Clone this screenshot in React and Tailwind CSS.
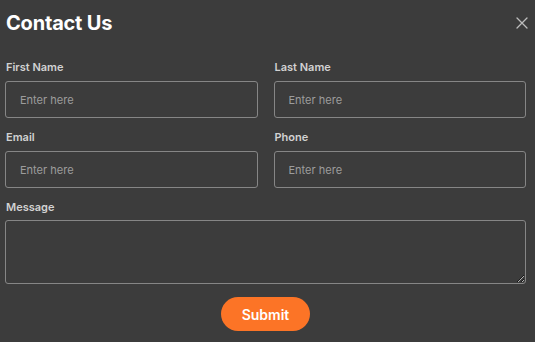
import React from "react";

function Field({ label }) {
  return (
    <div className="flex flex-col">
      <label className="pl-px text-[11px] leading-[16px] font-semibold text-[#d2d2d2] h-[16px]">{label}</label>
      <input
        placeholder="Enter here"
        className="mt-[6px] h-[37px] w-full rounded-[3px] border border-[#868686] bg-transparent pl-[14px] text-[11px] text-white placeholder-[#9c9c9c] outline-none"
      />
    </div>
  );
}

export default function App() {
  return (
    <div
      className="w-[535px] h-[342px] bg-[#3c3c3c] pl-[5px] pr-[9px] overflow-hidden"
      style={{ fontFamily: "Inter, 'Open Sans', sans-serif" }}
    >
      <div className="flex items-center justify-between mt-[9px] h-[28px] pl-px">
        <h1 className="text-[20px] leading-[28px] font-bold text-white tracking-[-0.2px]">Contact Us</h1>
        <svg width="12" height="12" viewBox="0 0 12 12" className="mr-[-2px]">
          <path d="M1 1 L11 11 M11 1 L1 11" stroke="#bdbdbd" strokeWidth="1.3" strokeLinecap="round" />
        </svg>
      </div>
      <div className="grid grid-cols-2 gap-x-4 gap-y-[11px] mt-[22px]">
        <Field label="First Name" />
        <Field label="Last Name" />
        <Field label="Email" />
        <Field label="Phone" />
      </div>
      <div className="flex flex-col mt-[11px]">
        <label className="pl-px text-[11px] leading-[16px] font-semibold text-[#d2d2d2] h-[16px]">Message</label>
        <textarea className="mt-[5px] h-[64px] w-full rounded-[3px] border border-[#868686] bg-transparent outline-none" />
      </div>
      <div className="flex justify-center mt-[13px]">
        <button className="w-[89px] h-[34px] rounded-full bg-[#fc7426] text-white text-[14px] font-semibold">
          Submit
        </button>
      </div>
    </div>
  );
}
